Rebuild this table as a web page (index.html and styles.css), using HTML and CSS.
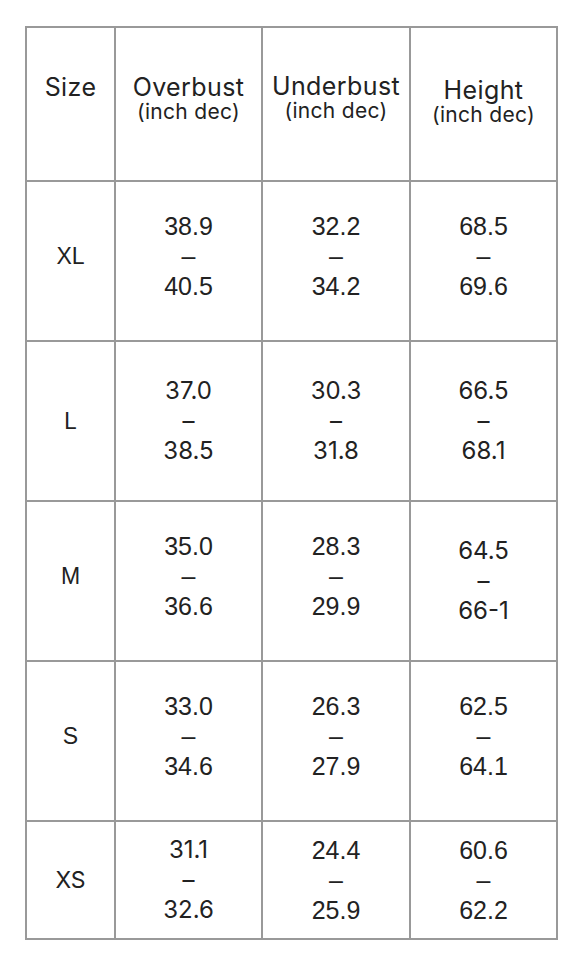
FILE: index.html
```html
<!DOCTYPE html>
<html>
<head>
<meta charset="utf-8">
<link rel="stylesheet" href="styles.css">
</head>
<body>
<table class="size-table">
  <colgroup>
    <col class="c-size"><col class="c-over"><col class="c-under"><col class="c-height">
  </colgroup>
  <thead>
    <tr class="head-row">
      <th class="h-size"><span class="h-main">Size</span></th>
      <th class="h-over"><span class="h-main">Overbust</span><span class="h-sub">(inch dec)</span></th>
      <th class="h-under"><span class="h-main">Underbust</span><span class="h-sub">(inch dec)</span></th>
      <th class="h-height"><span class="h-main">Height</span><span class="h-sub">(inch dec)</span></th>
    </tr>
  </thead>
  <tbody>
    <tr class="row">
      <td class="a lbl">XL</td>
      <td class="a">38.9<br>–<br>40.5</td>
      <td class="a">32.2<br>–<br>34.2</td>
      <td class="a">68.5<br>–<br>69.6</td>
    </tr>
    <tr class="row">
      <td class="p lbl">L</td>
      <td class="p">37.0<br>–<br>38.5</td>
      <td class="p">30.3<br>–<br>31.8</td>
      <td class="p">66.5<br>–<br>68.1</td>
    </tr>
    <tr class="row">
      <td class="a lbl">M</td>
      <td class="a">35.0<br>–<br>36.6</td>
      <td class="a">28.3<br>–<br>29.9</td>
      <td class="p">64.5<br>–<br>66-1</td>
    </tr>
    <tr class="row">
      <td class="a lbl">S</td>
      <td class="a">33.0<br>–<br>34.6</td>
      <td class="a">26.3<br>–<br>27.9</td>
      <td class="a">62.5<br>–<br>64.1</td>
    </tr>
    <tr class="row last">
      <td class="p lbl">XS</td>
      <td class="p">31.1<br>–<br>32.6</td>
      <td class="a">24.4<br>–<br>25.9</td>
      <td class="a">60.6<br>–<br>62.2</td>
    </tr>
  </tbody>
</table>
</body>
</html>
```

FILE: styles.css
```css
html, body {
  margin: 0;
  padding: 0;
  background: #ffffff;
}
body {
  padding: 26px 0 0 25px;
  color: #222222;
}
.size-table {
  border-collapse: collapse;
  width: 531px;
  table-layout: fixed;
}
.c-size { width: 89px; }
.c-over { width: 147px; }
.c-under { width: 148px; }
.c-height { width: 147px; }
.size-table th,
.size-table td {
  border: 2px solid #999999;
  padding: 0;
  text-align: center;
}
.head-row { height: 154px; }
.head-row th {
  font-family: Inter, "Noto Sans", sans-serif;
  font-weight: 400;
  vertical-align: top;
  padding-top: 46px;
}
.h-main {
  display: block;
  font-size: 25px;
  line-height: 26px;
  letter-spacing: 0.4px;
}
.h-sub {
  display: block;
  font-size: 21px;
  line-height: 24px;
  letter-spacing: 0.3px;
}
.head-row .h-height { padding-top: 49px; }
.head-row .h-under { padding-top: 45px; }
.row { height: 160px; }
.row.last { height: 118px; }
.size-table td {
  vertical-align: middle;
  font-size: 25px;
  line-height: 30px;
}
.a {
  font-family: "Liberation Sans", Arial, sans-serif;
}
.row .a { padding-bottom: 10px; }
.row.last .a { padding-bottom: 0; }
.p {
  font-family: Inter, "Noto Sans", sans-serif;
}
.row .p { font-size: 24px; }
.row .lbl { font-size: 23px; }
```
